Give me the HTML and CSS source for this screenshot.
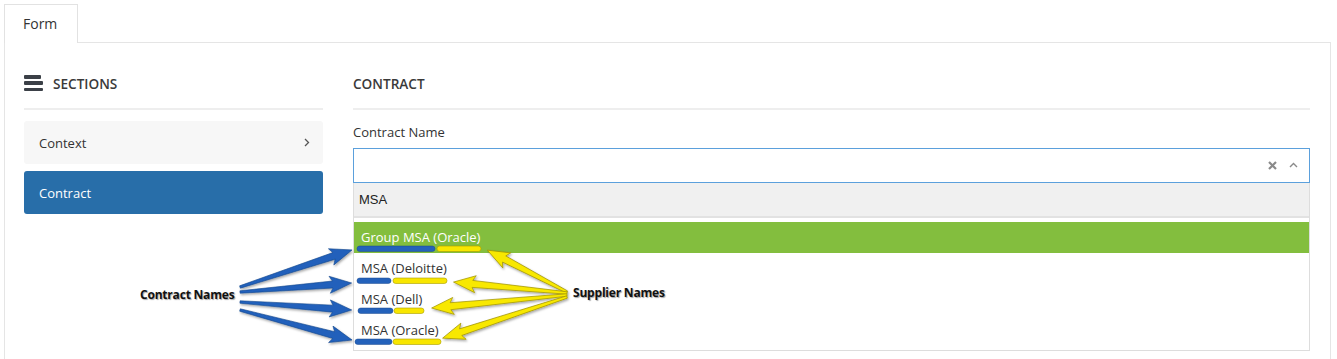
FILE: index.html
```html
<!DOCTYPE html>
<html>
<head>
<meta charset="utf-8">
<link rel="stylesheet" href="styles.css">
</head>
<body>
<div class="tabs"><div class="tab">Form</div></div>
<div class="panel">
  <aside class="sidebar">
    <div class="sec-head">
      <span class="burger"><i></i><i></i><i></i></span>
      <span>SECTIONS</span>
    </div>
    <div class="nav">
      <div class="nav-item">Context
        <svg class="chev" width="6" height="9" viewBox="0 0 6 9"><path d="M1 1 L4.5 4.5 L1 8" fill="none" stroke="#555" stroke-width="1.3"/></svg>
      </div>
      <div class="nav-item active">Contract</div>
    </div>
  </aside>
  <main class="main">
    <div class="sec-head"><span>CONTRACT</span></div>
    <div class="label">Contract Name</div>
    <div class="select">
      <div class="select-input">
        <svg class="icon-x" width="9" height="9" viewBox="0 0 9 9"><path d="M1 1 L8 8 M8 1 L1 8" stroke="#8a8a8a" stroke-width="2.2"/></svg>
        <svg class="icon-up" width="9" height="6" viewBox="0 0 9 6"><path d="M1 5 L4.5 1.5 L8 5" fill="none" stroke="#8a8a8a" stroke-width="1.4"/></svg>
      </div>
      <div class="dropdown">
        <div class="search">MSA</div>
        <ul class="options">
          <li class="opt hl">Group MSA (Oracle)</li>
          <li class="opt">MSA (Deloitte)</li>
          <li class="opt">MSA (Dell)</li>
          <li class="opt">MSA (Oracle)</li>
        </ul>
      </div>
    </div>
  </main>
</div>

<svg class="annot" width="1337" height="359" viewBox="0 0 1337 359">
  <defs>
    <filter id="sh" x="-20%" y="-50%" width="140%" height="200%">
      <feDropShadow dx="1" dy="1.5" stdDeviation="0.8" flood-color="#000" flood-opacity="0.35"/>
    </filter>
  </defs>
  <g class="bars">
    <rect x="357" y="246" width="78" height="5.5" rx="2.7" class="b"/>
    <rect x="437" y="246" width="44" height="5.5" rx="2.7" class="y"/>
    <rect x="357" y="278" width="34" height="5.5" rx="2.7" class="b"/>
    <rect x="393" y="278" width="54" height="5.5" rx="2.7" class="y"/>
    <rect x="358" y="308" width="35" height="5.5" rx="2.7" class="b"/>
    <rect x="394" y="308" width="30" height="5.5" rx="2.7" class="y"/>
    <rect x="355" y="339" width="37" height="5.5" rx="2.7" class="b"/>
    <rect x="393" y="339" width="48" height="5.5" rx="2.7" class="y"/>
  </g>
  <g class="blue-arrows" filter="url(#sh)">
    <path transform="translate(240 287) rotate(-18.3)" d="M0,-1.2 L99,-3.5 L96,-8.5 L118,0 L96,8.5 L99,3.5 L0,1.2Z"/>
    <path transform="translate(240 292) rotate(-4.6)" d="M0,-1.2 L93,-3.5 L90,-8.5 L112,0 L90,8.5 L93,3.5 L0,1.2Z"/>
    <path transform="translate(240 302) rotate(4.1)" d="M0,-1.2 L93,-3.5 L90,-8.5 L112,0 L90,8.5 L93,3.5 L0,1.2Z"/>
    <path transform="translate(240 310) rotate(15)" d="M0,-1.2 L97,-3.5 L94,-8.5 L116,0 L94,8.5 L97,3.5 L0,1.2Z"/>
  </g>
  <g class="yellow-arrows" filter="url(#sh)">
    <path transform="translate(567 292) rotate(-152.3)" d="M0,-1.2 L71,-3.5 L68,-8.5 L90,0 L68,8.5 L71,3.5 L0,1.2Z"/>
    <path transform="translate(567 293) rotate(-174.5)" d="M0,-1.2 L95,-3.5 L92,-8.5 L114,0 L92,8.5 L95,3.5 L0,1.2Z"/>
    <path transform="translate(567 295) rotate(174.5)" d="M0,-1.2 L117,-3.5 L114,-8.5 L136,0 L114,8.5 L117,3.5 L0,1.2Z"/>
    <path transform="translate(567 297) rotate(161.7)" d="M0,-1.2 L112,-3.5 L109,-8.5 L131,0 L109,8.5 L112,3.5 L0,1.2Z"/>
  </g>
</svg>
<div class="note note-contract">Contract Names</div>
<div class="note note-supplier">Supplier Names</div>
</body>
</html>
```

FILE: styles.css
```css
* { box-sizing: border-box; }
body {
  margin: 0;
  font-family: "Open Sans", "DejaVu Sans", sans-serif;
  font-size: 13px;
  color: #333;
  background: #fff;
  width: 1337px;
  height: 359px;
  overflow: hidden;
}
.tabs {
  display: flex;
  padding: 4px 0 0 4px;
}
.tab {
  position: relative;
  z-index: 1;
  width: 74px;
  height: 39px;
  margin-bottom: -1px;
  border: 1px solid #e2e2e2;
  border-bottom: none;
  background: #fff;
  padding-left: 18px;
  line-height: 37px;
  font-size: 14px;
  color: #333;
}
.panel {
  display: flex;
  margin-left: 4px;
  width: 1327px;
  height: 317px;
  border: 1px solid #e5e5e5;
  border-bottom: none;
  padding: 0 20px 0 19px;
}
.sidebar {
  width: 299px;
  flex: none;
}
.main {
  flex: 1;
  margin-left: 30px;
}
.sec-head {
  display: flex;
  align-items: center;
  height: 67px;
  padding-top: 30px;
  padding-bottom: 15px;
  border-bottom: 2px solid #eeeeee;
  font-weight: 600;
  font-size: 13.6px;
  color: #3a3a3a;
}
.burger {
  display: flex;
  flex-direction: column;
  justify-content: space-between;
  width: 19px;
  height: 16px;
  margin-right: 10px;
}
.burger i {
  display: block;
  height: 3.5px;
  background: #3b4047;
  border-radius: 1px;
}
.burger i:first-child { width: 17px; }
.nav {
  display: flex;
  flex-direction: column;
  gap: 7px;
  margin-top: 11px;
}
.nav-item {
  display: flex;
  align-items: center;
  justify-content: space-between;
  height: 43px;
  padding: 0 13px 0 15px;
  background: #f7f7f7;
  border-radius: 3px;
  color: #333;
}
.nav-item.active {
  background: #286ea9;
  color: #fff;
}
.label {
  margin-top: 12px;
  line-height: 20px;
  color: #333;
}
.select {
  margin-top: 6px;
  width: 957px;
}
.select-input {
  display: flex;
  align-items: center;
  justify-content: flex-end;
  gap: 12px;
  height: 35px;
  border: 1px solid #5ba0dc;
  padding-right: 11px;
}
.icon-up { margin-top: -1px; }
.dropdown {
  border: 1px solid #dddddd;
  border-top: none;
  height: 168px;
}
.search {
  height: 35px;
  background: #f0f0f0;
  border-bottom: 2px solid #e2e2e2;
  padding-left: 5px;
  line-height: 34px;
  font-family: "Liberation Sans", Arial, sans-serif;
  font-size: 13px;
  color: #222;
}
.options {
  list-style: none;
  margin: 0;
  padding: 4px 0 0;
}
.opt {
  height: 31px;
  line-height: 30px;
  padding-left: 7px;
  color: #333;
}
.opt.hl {
  background: #83be3e;
  color: #fff;
}
.annot {
  position: absolute;
  left: 0;
  top: 0;
  pointer-events: none;
}
.bars .b { fill: #2462bb; stroke: #1a4a8e; stroke-width: 0.5; }
.bars .y { fill: #f8e600; stroke: #a89c00; stroke-width: 0.6; }
.blue-arrows path { fill: #2060bb; stroke: #184a90; stroke-width: 0.6; }
.yellow-arrows path { fill: #f8e800; stroke: #a09400; stroke-width: 0.7; }
.note {
  position: absolute;
  font-family: "Open Sans", "DejaVu Sans", sans-serif;
  font-weight: 700;
  font-size: 12px;
  line-height: 16px;
  color: #111;
  text-shadow: 1px 1px 1px rgba(0,0,0,0.35);
  letter-spacing: -0.2px;
}
.note-contract { left: 140px; top: 287px; }
.note-supplier { left: 573px; top: 285px; }
```
